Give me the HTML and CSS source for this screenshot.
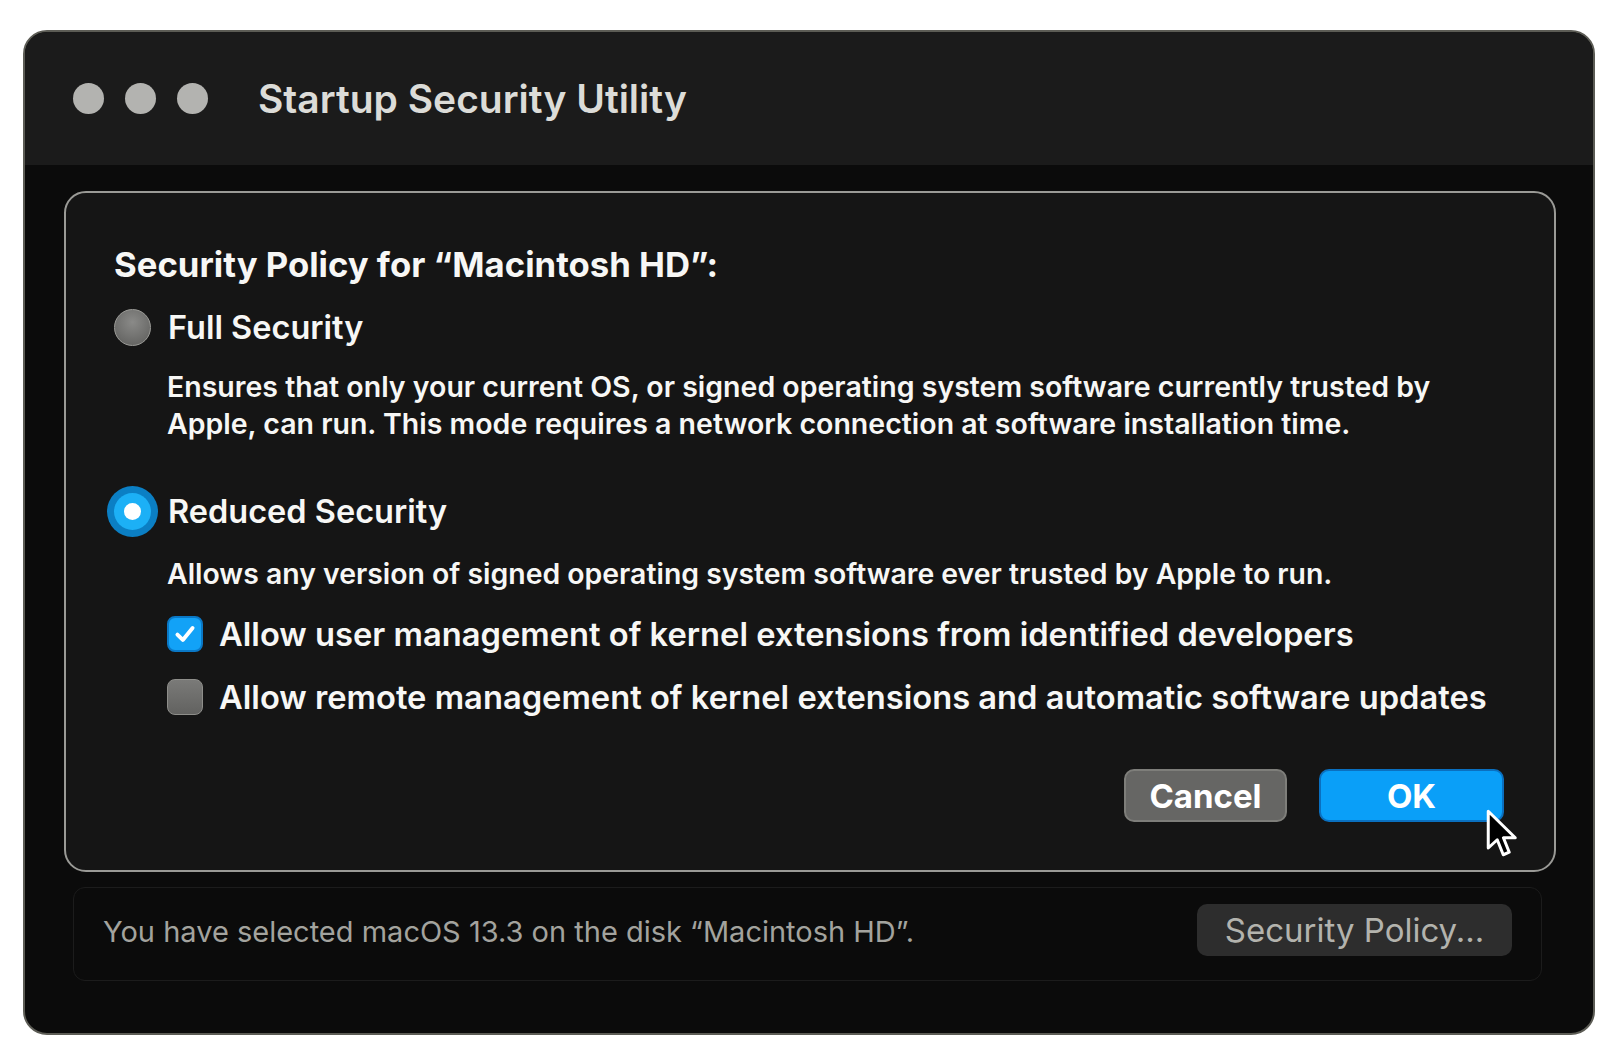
FILE: index.html
```html
<!DOCTYPE html>
<html lang="en">
<head>
    <meta charset="UTF-8">
    <title>Startup Security Utility</title>
    <link rel="stylesheet" href="styles.css">
</head>
<body>
    <div class="window">
        <!-- Title bar with the three window buttons -->
        <div class="titlebar">
            <div class="lights">
                <span class="light"></span>
                <span class="light"></span>
                <span class="light"></span>
            </div>
            <h1 class="title">Startup Security Utility</h1>
        </div>

        <!-- Policy sheet -->
        <div class="sheet">
            <h2 class="heading">Security Policy for “Macintosh HD”:</h2>

            <label class="option">
                <span class="radio"></span>
                <span class="option-label">Full Security</span>
            </label>
            <p class="desc desc-full">Ensures that only your current OS, or signed operating system software currently trusted by<br>Apple, can run. This mode requires a network connection at software installation time.</p>

            <label class="option option-reduced">
                <span class="radio radio-on"><span class="dot"></span></span>
                <span class="option-label">Reduced Security</span>
            </label>
            <p class="desc desc-reduced">Allows any version of signed operating system software ever trusted by Apple to run.</p>

            <label class="check-row">
                <span class="checkbox checkbox-on">
                    <svg viewBox="0 0 24 24" width="26" height="26"><path d="M5 12.5 L10 17.5 L19 6.5" fill="none" stroke="#fff" stroke-width="3.6" stroke-linecap="round" stroke-linejoin="round"/></svg>
                </span>
                <span class="check-label">Allow user management of kernel extensions from identified developers</span>
            </label>
            <label class="check-row">
                <span class="checkbox"></span>
                <span class="check-label">Allow remote management of kernel extensions and automatic software updates</span>
            </label>

            <div class="buttons">
                <button class="btn btn-cancel">Cancel</button>
                <button class="btn btn-ok">OK</button>
                <!-- mouse pointer resting on the OK button -->
                <svg class="pointer" viewBox="0 0 22 34" width="33" height="51">
                    <path d="M1.5 1.5 L1.5 26 L7.5 20.5 L11.5 30.5 L15.5 28.8 L11.6 19.2 L19.5 19.2 Z" fill="#000" stroke="#fff" stroke-width="2" stroke-linejoin="round"/>
                </svg>
            </div>
        </div>

        <!-- Footer with disk info -->
        <div class="footer">
            <p class="disk-info">You have selected macOS 13.3 on the disk “Macintosh HD”.</p>
            <button class="btn-policy">Security Policy...</button>
        </div>
    </div>
</body>
</html>
```

FILE: styles.css
```css
body {
    margin: 0;
    background: #ffffff;
    font-family: Inter, "Noto Sans", sans-serif;
}
.window {
    margin: 30px 0 0 23px;
    width: 1572px;
    height: 1005px;
    box-sizing: border-box;
    border: 2px solid #5c5c55;
    border-radius: 24px;
    background: #0b0b0b;
    overflow: hidden;
    display: flex;
    flex-direction: column;
}
.titlebar {
    height: 133px;
    background: #1b1b1b;
    display: flex;
    align-items: center;
    padding-left: 48px;
    flex-shrink: 0;
}
.lights {
    display: flex;
    gap: 21px;
}
.light {
    width: 31px;
    height: 31px;
    border-radius: 50%;
    background: #b3b3b0;
}
.title {
    margin: 0 0 0 50px;
    font-size: 39px;
    font-weight: 600;
    color: #dcdcd8;
}
.sheet {
    margin: 26px 37px 0 39px;
    height: 681px;
    box-sizing: border-box;
    border: 2px solid #9a9a96;
    border-radius: 22px;
    background: #151515;
    padding: 50px 50px 0 48px;
    display: flex;
    flex-direction: column;
    color: #f7f7f5;
}
.heading {
    margin: 0;
    font-size: 34.7px;
    line-height: 42px;
    font-weight: 700;
}
.option {
    display: flex;
    align-items: center;
    height: 42px;
    margin-top: 21px;
}
.option-reduced {
    height: 50px;
    margin-top: 44px;
}
.option-label {
    font-size: 32.5px;
    font-weight: 600;
    margin-left: 17px;
}
.radio {
    width: 37px;
    height: 37px;
    box-sizing: border-box;
    border-radius: 50%;
    background: radial-gradient(circle at 50% 35%, #8a8a88, #5c5c5a);
    border: 1px solid #9c9c98;
    display: flex;
    align-items: center;
    justify-content: center;
}
.radio-on {
    background: #1cb0f6;
    border: none;
    box-shadow: 0 0 0 7px #0b7fc4;
}
.dot {
    width: 17px;
    height: 17px;
    border-radius: 50%;
    background: #ffffff;
}
.desc {
    margin: 20px 0 0 53px;
    font-size: 28.5px;
    line-height: 37px;
    font-weight: 600;
}
.desc-reduced {
    margin-top: 19px;
    font-size: 28.4px;
}
.check-row {
    display: flex;
    align-items: center;
    height: 42px;
    margin: 21px 0 0 53px;
}
.checkbox {
    width: 36px;
    height: 36px;
    box-sizing: border-box;
    border-radius: 8px;
    background: linear-gradient(#7a7a78, #626260);
    border: 1px solid #8e8e8a;
    display: flex;
    align-items: center;
    justify-content: center;
}
.checkbox-on {
    background: #12a2f7;
    border: 2px solid #0a78c6;
}
.check-label {
    margin-left: 16px;
    font-size: 32.7px;
    font-weight: 600;
}
.buttons {
    position: relative;
    display: flex;
    justify-content: flex-end;
    gap: 32px;
    margin-top: 51px;
}
.btn {
    height: 53px;
    border-radius: 10px;
    font-family: inherit;
    font-size: 33px;
    font-weight: 700;
    color: #ffffff;
    padding: 0;
}
.btn-cancel {
    width: 163px;
    background: #666664;
    border: 2px solid #7e7e7a;
}
.btn-ok {
    width: 185px;
    background: #0a9ff8;
    border: 2px solid #0a70c0;
}
.pointer {
    position: absolute;
    right: -15px;
    top: 40px;
}
.footer {
    margin: 15px 51px 0 48px;
    height: 94px;
    box-sizing: border-box;
    border: 1px solid #1c1c1c;
    border-radius: 12px;
    display: flex;
    align-items: center;
    justify-content: space-between;
    padding: 0 29px;
}
.disk-info {
    margin: 0 0 6px 0;
    font-size: 29px;
    color: #a3a39e;
}
.btn-policy {
    width: 315px;
    height: 52px;
    margin-bottom: 8px;
    border: none;
    border-radius: 10px;
    background: #2d2d2d;
    color: #b3b3ad;
    font-family: inherit;
    font-size: 33px;
}
```
